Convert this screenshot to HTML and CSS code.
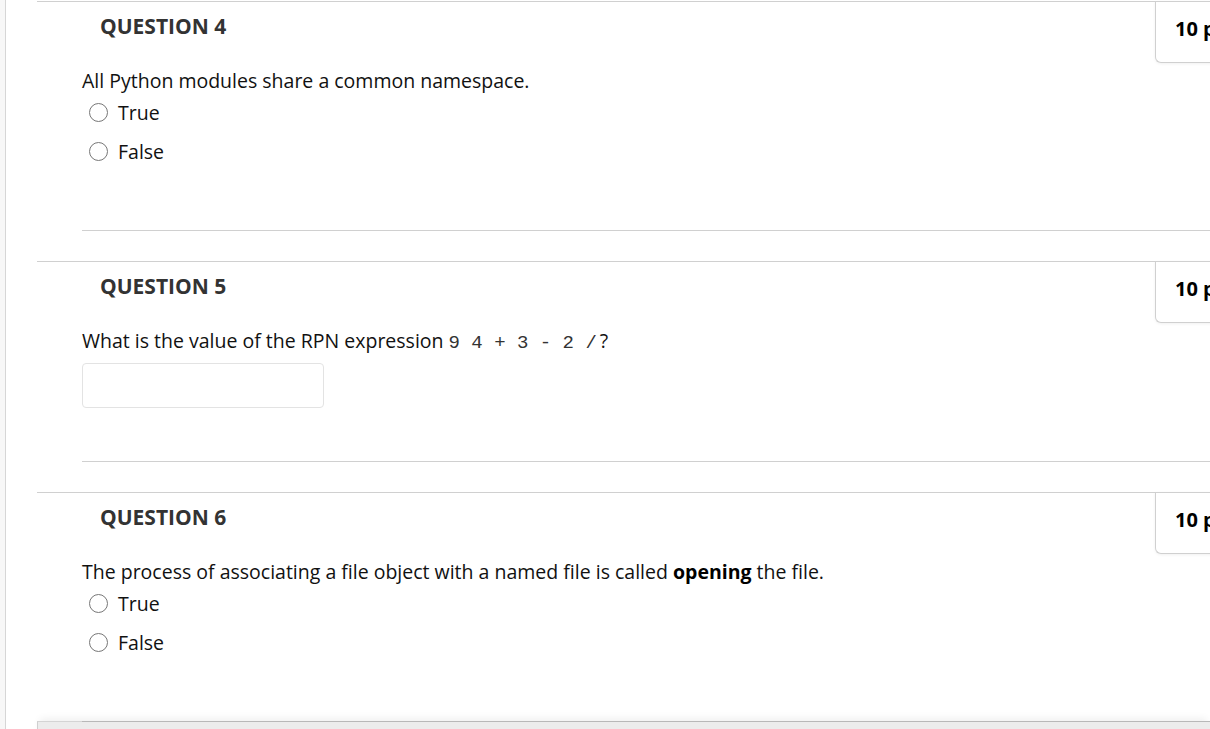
FILE: index.html
```html
<!DOCTYPE html>
<html lang="en">
<head>
<meta charset="utf-8">
<title>Quiz</title>
<link rel="stylesheet" href="styles.css">
</head>
<body>
<div class="page">
  <div class="rail"></div>
  <main class="content">
    <section class="question">
      <div class="points">10 pts</div>
      <h3 class="q-title">QUESTION 4</h3>
      <div class="q-body">
        <p class="q-text">All Python modules share a common namespace.</p>
        <ul class="options">
          <li class="option"><span class="radio"></span><span class="label">True</span></li>
          <li class="option"><span class="radio"></span><span class="label">False</span></li>
        </ul>
      </div>
      <div class="q-sep"></div>
    </section>

    <section class="question">
      <div class="points">10 pts</div>
      <h3 class="q-title">QUESTION 5</h3>
      <div class="q-body q-body-input">
        <p class="q-text">What is the value of the RPN expression <code class="code">9 4 + 3 - 2 /</code>?</p>
        <div class="answer-box"></div>
      </div>
      <div class="q-sep"></div>
    </section>

    <section class="question">
      <div class="points">10 pts</div>
      <h3 class="q-title">QUESTION 6</h3>
      <div class="q-body">
        <p class="q-text">The process of associating a file object with a named file is called <strong>opening</strong> the file.</p>
        <ul class="options">
          <li class="option"><span class="radio"></span><span class="label">True</span></li>
          <li class="option"><span class="radio"></span><span class="label">False</span></li>
        </ul>
      </div>
      <div class="q-sep q-sep-last"></div>
    </section>

    <div class="next-block"></div>
  </main>
</div>
</body>
</html>
```

FILE: styles.css
```css
html, body {
  margin: 0;
  padding: 0;
  background: #ffffff;
  overflow: hidden;
}

body {
  font-family: "Open Sans", "Noto Sans", sans-serif;
  color: #111;
  width: 1210px;
  height: 729px;
}

.page {
  display: flex;
  height: 729px;
  overflow: hidden;
}

.rail {
  flex: 0 0 5px;
  background: #f7f7f7;
  border-right: 1px solid #d6d6d6;
}

.content {
  flex: 1;
  padding-left: 31px;
  padding-top: 1px;
  min-width: 0;
}

.question {
  position: relative;
  border-top: 1px solid #d0d0d0;
  margin-bottom: 30px;
}

.points {
  position: absolute;
  top: -1px;
  left: calc(100% - 55px);
  width: 110px;
  height: 62px;
  box-sizing: border-box;
  padding: 14px 0 0 19px;
  background: #fff;
  border: 1px solid #d0d0d0;
  border-right: none;
  border-radius: 0 0 0 6px;
  box-shadow: 0 1px 3px rgba(0, 0, 0, 0.06);
  font-weight: 700;
  font-size: 20px;
  line-height: 26px;
  color: #000;
  white-space: nowrap;
}

.q-title {
  margin: 0;
  padding: 11px 0 0 63px;
  font-size: 21px;
  line-height: 26px;
  font-weight: 700;
  color: #333;
}

.q-body {
  padding-left: 45px;
  padding-top: 29px;
  padding-bottom: 59px;
}

.q-body-input {
  padding-bottom: 53px;
}

.q-text {
  margin: 0;
  font-size: 19.5px;
  line-height: 26px;
  color: #111;
}

.q-text strong {
  font-weight: 700;
  color: #000;
}

.code {
  font-family: "Liberation Mono", "Courier New", monospace;
  font-size: 19px;
  color: #333;
  margin-right: 3px;
}

.options {
  list-style: none;
  margin: -1px 0 0 0;
  padding: 0;
}

.option {
  display: flex;
  align-items: center;
  height: 39px;
  padding-left: 7px;
}

.radio {
  flex: 0 0 auto;
  width: 19px;
  height: 19px;
  box-sizing: border-box;
  border: 1px solid #777;
  border-radius: 50%;
  margin-right: 10px;
  background: #fff;
}

.label {
  font-size: 19.5px;
  line-height: 26px;
  color: #111;
}

.answer-box {
  width: 242px;
  height: 45px;
  box-sizing: border-box;
  margin-top: 7px;
  border: 1px solid #e3e3e3;
  border-radius: 4px;
  background: #fff;
}

.q-sep {
  margin-left: 45px;
  border-top: 1px solid #d0d0d0;
}

.q-sep-last {
  border-top-color: #b8b8b8;
  position: relative;
  z-index: 2;
}

.next-block {
  margin-top: -31px;
  height: 40px;
  background: #ececec;
  border-top: 1px solid #d4d4d4;
  border-left: 1px solid #cfcfcf;
  box-shadow: 0 -5px 8px -3px rgba(0, 0, 0, 0.07);
}
```
